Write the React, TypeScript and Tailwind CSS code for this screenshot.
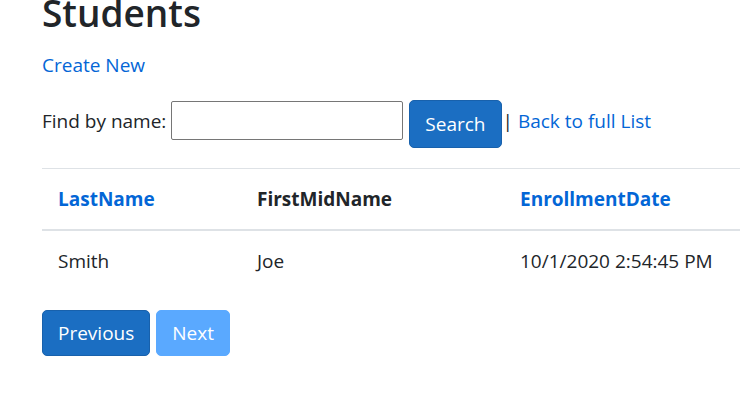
export default function App() {
  return (
    <div className="w-[740px] h-[416px] overflow-hidden bg-white pl-[42px] text-[19px] leading-[30px] text-[#212529] font-['Open_Sans','Noto_Sans',sans-serif]">
      <h1 className="mt-[-9px] mb-[15px] text-[37px] leading-[1.2] font-semibold">Students</h1>

      <p className="mb-[20px]">
        <a href="#" className="text-[#0366d6]">Create New</a>
      </p>

      {/* search form */}
      <form className="flex items-start mb-[20px]" onSubmit={(e) => e.preventDefault()}>
        <span className="mt-[6px]">Find by name:</span>
        <input
          type="text"
          className="ml-[5px] mt-[1px] w-[232px] h-[39px] border border-[#767676] rounded-[2px] px-1 outline-none"
        />
        <button
          type="submit"
          className="ml-[6px] h-[48px] px-[15px] rounded-[5px] bg-[#1b6ec2] border border-[#1861ac] text-white"
        >
          Search
        </button>
        <span className="ml-[1px] mt-[6px]">
          |{" "}
          <a href="#" className="text-[#0366d6]">Back to full List</a>
        </span>
      </form>

      {/* students table */}
      <table className="w-full border-collapse mb-[19px]">
        <thead>
          <tr>
            <th className="w-[200px] text-left font-bold px-[16px] py-[15px] border-t border-[#dee2e6] border-b-2">
              <a href="#" className="text-[#0366d6]">LastName</a>
            </th>
            <th className="w-[263px] text-left font-bold px-[15px] py-[15px] border-t border-[#dee2e6] border-b-2">
              FirstMidName
            </th>
            <th className="text-left font-bold px-[15px] py-[15px] border-t border-[#dee2e6] border-b-2">
              <a href="#" className="text-[#0366d6]">EnrollmentDate</a>
            </th>
          </tr>
        </thead>
        <tbody>
          <tr>
            <td className="px-[16px] py-[15px]">Smith</td>
            <td className="px-[15px] py-[15px]">Joe</td>
            <td className="px-[15px] py-[15px]">10/1/2020 2:54:45 PM</td>
          </tr>
        </tbody>
      </table>

      {/* pager */}
      <div className="flex gap-[6px]">
        <a href="#" className="h-[46px] px-[15px] flex items-center rounded-[5px] bg-[#1b6ec2] border border-[#1861ac] text-white">
          Previous
        </a>
        <a href="#" className="h-[46px] px-[15px] flex items-center rounded-[5px] bg-[#5aa9ff] border border-[#5aa9ff] text-white">
          Next
        </a>
      </div>
    </div>
  );
}
